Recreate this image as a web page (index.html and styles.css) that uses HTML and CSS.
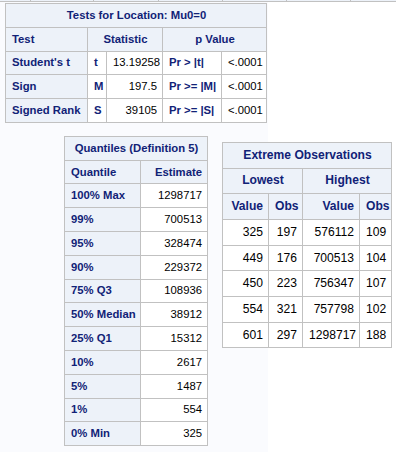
FILE: index.html
```html
<!DOCTYPE html>
<html>
<head>
<meta charset="utf-8">
<link rel="stylesheet" href="styles.css">
</head>
<body>
<div class="strip">
  <span class="seg w30"></span><span class="seg w63"></span><span class="seg w65"></span><span class="seg w64"></span><span class="seg w64"></span><span class="seg w64"></span><span class="seg rest"></span>
</div>
<table class="sas tests">
  <colgroup><col class="c82"><col class="c19"><col class="c56"><col class="c59"><col class="c45"></colgroup>
  <tr><th class="title" colspan="5">Tests for Location: Mu0=0</th></tr>
  <tr><th class="l">Test</th><th colspan="2">Statistic</th><th colspan="2">p Value</th></tr>
  <tr><th class="l rh">Student's t</th><td class="lab">t</td><td class="r">13.19258</td><td class="lab">Pr &gt; |t|</td><td class="l">&lt;.0001</td></tr>
  <tr><th class="l rh">Sign</th><td class="lab">M</td><td class="r">197.5</td><td class="lab">Pr &gt;= |M|</td><td class="l">&lt;.0001</td></tr>
  <tr><th class="l rh">Signed Rank</th><td class="lab">S</td><td class="r">39105</td><td class="lab">Pr &gt;= |S|</td><td class="l">&lt;.0001</td></tr>
</table>
<div class="row">
  <table class="sas quant">
    <colgroup><col class="c76"><col class="c67"></colgroup>
    <tr><th class="title" colspan="2">Quantiles (Definition 5)</th></tr>
    <tr><th class="l">Quantile</th><th class="r">Estimate</th></tr>
    <tr><th class="l rh">100% Max</th><td class="r">1298717</td></tr>
    <tr><th class="l rh">99%</th><td class="r">700513</td></tr>
    <tr><th class="l rh">95%</th><td class="r">328474</td></tr>
    <tr><th class="l rh">90%</th><td class="r">229372</td></tr>
    <tr><th class="l rh">75% Q3</th><td class="r">108936</td></tr>
    <tr><th class="l rh">50% Median</th><td class="r">38912</td></tr>
    <tr><th class="l rh">25% Q1</th><td class="r">15312</td></tr>
    <tr><th class="l rh">10%</th><td class="r">2617</td></tr>
    <tr><th class="l rh">5%</th><td class="r">1487</td></tr>
    <tr><th class="l rh">1%</th><td class="r">554</td></tr>
    <tr><th class="l rh">0% Min</th><td class="r">325</td></tr>
  </table>
  <table class="sas extreme">
    <colgroup><col class="c46"><col class="c34"><col class="c57"><col class="c32"></colgroup>
    <tr><th class="title" colspan="4">Extreme Observations</th></tr>
    <tr><th colspan="2">Lowest</th><th colspan="2">Highest</th></tr>
    <tr><th class="r">Value</th><th class="r">Obs</th><th class="r">Value</th><th class="r">Obs</th></tr>
    <tr><td class="r">325</td><td class="r">197</td><td class="r">576112</td><td class="r">109</td></tr>
    <tr><td class="r">449</td><td class="r">176</td><td class="r">700513</td><td class="r">104</td></tr>
    <tr><td class="r">450</td><td class="r">223</td><td class="r">756347</td><td class="r">107</td></tr>
    <tr><td class="r">554</td><td class="r">321</td><td class="r">757798</td><td class="r">102</td></tr>
    <tr><td class="r">601</td><td class="r">297</td><td class="r">1298717</td><td class="r">188</td></tr>
  </table>
</div>
</body>
</html>
```
FILE: styles.css
```css
html, body {
  margin: 0;
  padding: 0;
}
body {
  background: linear-gradient(to right, #FAFBFE 268px, #FFFFFF 268px);
  min-height: 452px;
  font-family: "Liberation Sans", Arial, sans-serif;
}
.strip {
  display: flex;
  height: 1px;
  background: #EDF2F9;
  border-bottom: 1px solid #C1C1C1;
}
.seg {
  display: block;
  height: 100%;
  border-right: 1px solid #C1C1C1;
  box-sizing: border-box;
}
.w30 { width: 31px; }
.w63 { width: 63px; }
.w65 { width: 65px; }
.w64 { width: 64px; }
.rest { flex: 1; border-right: 0; }

.sas {
  border-collapse: collapse;
  table-layout: fixed;
  border: 1px solid #C1C1C1;
  background: #FFFFFF;
}
.sas th, .sas td {
  border: 1px solid #C1C1C1;
  padding: 4.9px 5px 4.9px 6px;
  line-height: 13px;
  white-space: nowrap;
  overflow: hidden;
}
.sas th {
  background: #EDF2F9;
  color: #112277;
  font-weight: bold;
  text-align: center;
}
.sas td {
  color: #000000;
  font-weight: normal;
}
.sas .l { text-align: left; }
.sas .r { text-align: right; }
.sas td.lab {
  color: #112277;
  font-weight: bold;
  text-align: left;
}

.tests {
  font-size: 11.3px;
  width: 262px;
  margin: 1px 0 0 5px;
}
.c82 { width: 82px; }
.c19 { width: 19px; }
.c56 { width: 56px; }
.c59 { width: 59px; }
.c45 { width: 45px; }

.row {
  display: flex;
  align-items: flex-start;
  margin-top: 13px;
}
.quant {
  font-size: 11.3px;
  width: 144px;
  margin-left: 64px;
}
.c76 { width: 76px; }
.c67 { width: 67px; }

.extreme {
  font-size: 12.1px;
  width: 170px;
  margin-left: 14px;
  margin-top: 6px;
}
.extreme th, .extreme td {
  padding-top: 5.85px;
  padding-bottom: 5.85px;
}
.c46 { width: 46px; }
.c34 { width: 34px; }
.c57 { width: 57px; }
.c32 { width: 32px; }
```
